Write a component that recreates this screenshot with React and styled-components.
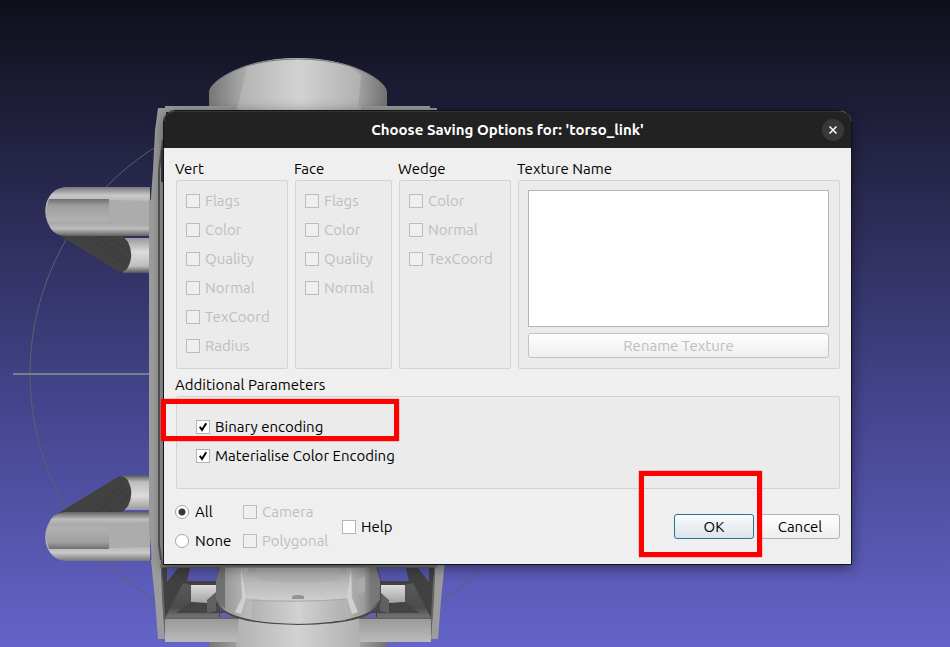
import React from "react";
import styled, { createGlobalStyle, css } from "styled-components";

const GlobalStyle = createGlobalStyle`
  *, *::before, *::after { box-sizing: border-box; }
  body {
    margin: 0;
    font-family: Ubuntu, "Noto Sans", "Open Sans", sans-serif;
    font-size: 15px;
    color: #000;
  }
  button, input, select { font: inherit; color: inherit; margin: 0; }
`;

const Viewport = styled.main`
  position: relative;
  min-height: 100vh;
  overflow: hidden;
  padding: 110px 98px 82px 163px;
  background: linear-gradient(#0f0f1a 0%, #151527 7%, #242445 24%, #43438a 61%, #6464c9 100%);
`;

const Scene = styled.svg`
  position: absolute;
  inset: 0;
  width: 100%;
  height: 100%;
`;

const Dialog = styled.section`
  position: relative;
  border: 1px solid #121218;
  border-radius: 12px 12px 0 0;
  background: #efefef;
  box-shadow: 0 3px 14px rgba(0, 0, 0, 0.45);
`;

const TitleBar = styled.header`
  display: grid;
  grid-template-columns: 1fr auto 1fr;
  align-items: center;
  height: 37px;
  padding: 0 7px 1px;
  border-radius: 11px 11px 0 0;
  background: #222;
  border-top: 1px solid #343434;
  color: #fff;
`;

const Title = styled.h1`
  grid-column: 2;
  margin: 0;
  font-size: 15px;
  line-height: 20px;
  font-weight: 700;
`;

const CloseButton = styled.button`
  justify-self: end;
  display: grid;
  place-items: center;
  width: 22px;
  height: 22px;
  padding: 0;
  border: 0;
  border-radius: 50%;
  background: #383838;
  color: #fff;
`;

const Body = styled.form`
  padding: 10px 11px 14px 12px;
`;

const Columns = styled.div`
  display: grid;
  grid-template-columns: 112px 97px 112px minmax(0, 1fr);
  gap: 7px;
`;

const Group = styled.div`
  position: relative;
  display: flex;
  flex-direction: column;
  min-width: 0;
`;

const GroupTitle = styled.h2`
  margin: 0 0 0 -1px;
  font-size: 15px;
  font-weight: 400;
  line-height: 22px;
`;

const framed = css`
  flex: 1;
  display: flex;
  flex-direction: column;
  border: 1px solid #d3d3d3;
  border-radius: 2px;
  background: #ebebeb;
`;

const OptionList = styled.div`
  ${framed}
  gap: 11px;
  padding: ${(p) => (p.$roomy ? "21px 19px 23px" : "11px 9px 13px")};
`;

const TextureFrame = styled.div`
  ${framed}
  gap: 6px;
  padding: 9px 10px 10px 9px;
`;

const TextureList = styled.select`
  flex: 1;
  width: 100%;
  min-height: 0;
  border: 1px solid #b4b4b4;
  border-radius: 0;
  background: #fff;
  outline: 0;
`;

const PushButton = styled.button`
  height: 25px;
  min-width: 80px;
  padding: 0 8px;
  border: 1px solid ${(p) => (p.$primary ? "#2f7099" : "#b3b3b3")};
  border-radius: 3px;
  background: ${(p) =>
    p.$primary ? "linear-gradient(#fafbfc, #dbe3ea)" : "linear-gradient(#fefefe, #eeeeee)"};
  line-height: 20px;
  &:disabled { color: #bebebe; border-color: #c3c3c3; }
`;

const Option = styled.label`
  display: flex;
  align-items: center;
  gap: ${(p) => (p.$radio ? "6px" : "5px")};
  height: 18px;
  line-height: 20px;
  white-space: nowrap;
  color: ${(p) => (p.$disabled ? "#bebebe" : "#000")};
`;

const tick =
  "url(\"data:image/svg+xml,%3Csvg xmlns='http://www.w3.org/2000/svg' viewBox='0 0 12 12'%3E%3Cpath d='M2.8 5.8 5 9 9.2 2.2' fill='none' stroke='%23000' stroke-width='2'/%3E%3C/svg%3E\")";

const Tick = styled.input`
  appearance: none;
  flex: none;
  width: 14px;
  height: 14px;
  border: 1px solid #b4b4b4;
  background: #fff;
  &:disabled { background: #efefef; border-color: #bcbcbc; }
  &:checked { background: #fff ${tick} center / 12px 12px no-repeat; }
`;

const Radio = styled.input`
  appearance: none;
  flex: none;
  width: 14px;
  height: 14px;
  border: 1px solid #a3a3a3;
  border-radius: 50%;
  background: #fff;
  &:checked { background: radial-gradient(circle, #363636 0 3px, #fff 4px); }
`;

const Parameters = styled(Group)`
  margin-top: 5px;
`;

const Footer = styled.div`
  display: flex;
  align-items: center;
  margin: 14px 0 0 -1px;
`;

const Stack = styled.div`
  display: flex;
  flex-direction: column;
  gap: 11px;
  width: ${(p) => p.$width};
`;

const Actions = styled.div`
  position: relative;
  display: flex;
  gap: 6px;
  margin-left: auto;
`;

const Highlight = styled.span`
  position: absolute;
  border: 5px solid #fe0000;
  box-shadow: 0 0 1px #fe0000;
  pointer-events: none;
  ${(p) =>
    p.$area === "encoding"
      ? css`top: 25px; left: -15px; width: 238px; height: 42px;`
      : css`top: -43px; left: -35px; width: 123px; height: 86px;`}
`;

function Check({ label, disabled, ...rest }) {
  return (
    <Option $disabled={disabled}>
      <Tick type="checkbox" disabled={disabled} {...rest} />
      {label}
    </Option>
  );
}

function AttributeGroup({ title, items }) {
  return (
    <Group role="group" aria-label={title}>
      <GroupTitle>{title}</GroupTitle>
      <OptionList>
        {items.map((item) => (
          <Check key={item} label={item} disabled />
        ))}
      </OptionList>
    </Group>
  );
}

function Arm() {
  return (
    <g>
      <path d="M123 238h27v35h-27z" fill="url(#peg)" />
      <path d="M57 234 116 270Q122 274 127 269 135 256 128 242L122 235z" fill="#414141" />
      <path d="m96 236 31 24m-20-24 22 16m-39-14 34 27" stroke="#3b3b3b" fill="none" />
      <path d="M150 187H66Q51 188 46 204 43 217 51 229 56 236 67 236H150z" fill="url(#tube)" />
      <path d="M109 199H49Q45 209 48 222L60 221H109z" fill="url(#slot)" />
      <path d="M109 200 150 201V226L109 221z" fill="#acacac" />
    </g>
  );
}

function BaseSide() {
  return (
    <g>
      <path d="M161 567H220V620H161z" fill="#414141" />
      <path d="M167 568H178L167 582zM190 568H221L218 581H187z" fill="#5656ae" />
      <path d="M165 618 183 583 191 585V603L219 607V618z" fill="url(#floor)" />
      <path d="M191 585H218V602L207 603 191 602z" fill="url(#block)" />
      <path d="M191 602 207 604 226 613H176z" fill="#444" />
      <path d="M207 600 216 592V611L207 613z" fill="#606060" />
      <path d="M151 560H161L162 590 165 639H158L155 600z" fill="#9c9c9c" />
      <path d="M161 566 163 580 165 618V639L162 600z" fill="#646464" />
    </g>
  );
}

function RobotScene() {
  return (
    <Scene viewBox="0 0 950 647" preserveAspectRatio="xMidYMid slice" aria-hidden="true">
      <defs>
        <linearGradient id="cap">
          <stop offset="0" stopColor="#777" />
          <stop offset=".18" stopColor="#a5a5a5" />
          <stop offset=".5" stopColor="#cfcfcf" />
          <stop offset=".82" stopColor="#a8a8a8" />
          <stop offset="1" stopColor="#707070" />
        </linearGradient>
        <linearGradient id="facet">
          <stop offset="0" stopColor="#b2b2b2" />
          <stop offset=".5" stopColor="#d2d2d2" />
          <stop offset="1" stopColor="#b0b0b0" />
        </linearGradient>
        <linearGradient id="tube" x2="0" y2="1">
          <stop offset="0" stopColor="#777" />
          <stop offset=".17" stopColor="#c9c9c9" />
          <stop offset=".3" stopColor="#b6b6b6" />
          <stop offset=".75" stopColor="#aaa" />
          <stop offset=".85" stopColor="#bdbdbd" />
          <stop offset="1" stopColor="#626262" />
        </linearGradient>
        <linearGradient id="slot" x2="0" y2="1">
          <stop offset="0" stopColor="#707070" />
          <stop offset=".3" stopColor="#9f9f9f" />
          <stop offset="1" stopColor="#b3b3b3" />
        </linearGradient>
        <linearGradient id="peg" x2="0" y2="1">
          <stop offset="0" stopColor="#999" />
          <stop offset=".4" stopColor="#dcdcdc" />
          <stop offset=".8" stopColor="#bdbdbd" />
          <stop offset="1" stopColor="#555" />
        </linearGradient>
        <linearGradient id="block" x2="0" y2="1">
          <stop offset="0" stopColor="#ddd" />
          <stop offset="1" stopColor="#a2a2a2" />
        </linearGradient>
        <linearGradient id="floor" x2="0" y2="1">
          <stop offset="0" stopColor="#585858" />
          <stop offset=".7" stopColor="#4c4c4c" />
          <stop offset="1" stopColor="#777" />
        </linearGradient>
        <linearGradient id="ring">
          <stop offset="0" stopColor="#555" />
          <stop offset=".06" stopColor="#9a9a9a" />
          <stop offset=".2" stopColor="#bababa" />
          <stop offset=".3" stopColor="#c7c7c7" />
          <stop offset=".5" stopColor="#c0c0c0" />
          <stop offset=".72" stopColor="#c5c5c5" />
          <stop offset=".9" stopColor="#9c9c9c" />
          <stop offset="1" stopColor="#4c4c4c" />
        </linearGradient>
        <linearGradient id="recess" x2="0" y2="1">
          <stop offset="0" stopColor="#a4a4a4" />
          <stop offset=".5" stopColor="#bababa" />
          <stop offset="1" stopColor="#cecece" />
        </linearGradient>
        <linearGradient id="plate" x2="0" y2="1">
          <stop offset="0" stopColor="#999" />
          <stop offset=".5" stopColor="#aaa" />
          <stop offset="1" stopColor="#bbb" />
        </linearGradient>
      </defs>

      <circle cx="298" cy="374" r="268" fill="none" stroke="#5f5f69" />
      <path d="M13 374H150" stroke="#6a8786" strokeWidth="2" />

      <path d="M209 110V91Q213 80 235 70 262 58 298 58 334 58 361 70 383 80 387 91V110z" fill="url(#cap)" />
      <path d="M237 110 247 67Q270 60 298 60 328 60 350 67L361 75 358 110z" fill="url(#facet)" />
      <path d="M210 89Q219 76 246 66 270 59 298 59 326 59 350 66 378 76 386 89" fill="none" stroke="#7b7b7b" />

      <Arm />
      <g transform="translate(0 748) scale(1 -1)">
        <Arm />
      </g>

      <path d="M158 108H165V106H237V112H361V106H430V108H437V112H166V566H152L150 530V210L153 170 155 130z" fill="#9b9b9b" />
      <path d="M237 106H361V112H237z" fill="url(#facet)" />
      <path d="M149 200H155V545H151L149 530z" fill="#9c9c9c" />
      <path d="M163 140 159 170V545L162 566" fill="none" stroke="#585858" strokeWidth="2" />
      <path d="M161 150H163V182H161z" fill="#3e3e3e" />

      <BaseSide />
      <g transform="translate(596 0) scale(-1 1)">
        <BaseSide />
      </g>
      <path d="M165 619H431V642H165z" fill="url(#plate)" />
      <path d="M166 618H430" stroke="#666" strokeWidth="2" />
      <path d="M209 642H387V647H209z" fill="url(#cap)" />
      <path d="M239 617H359L360 647H236z" fill="url(#facet)" />
      <path d="M219 566H377L381 580V601Q377 624 298 625 220 624 216 601V580z" fill="#484848" />
      <path d="M220 566H376L380 580V600Q373 622 298 624 223 622 216 600V580z" fill="url(#ring)" />
      <path d="M220 567H225V608L216 600V580z" fill="#707070" />
      <path d="M371 567H376L380 580V600L371 608z" fill="#777" />
      <path d="M250 566H346L350 598Q298 603 245 598L241 580z" fill="url(#recess)" />
      <path d="M254 566H342L338 580Q298 585 260 580z" fill="#afafaf" />
      <path d="M241 568 246 598 241 614 235 612 242 598zM351 568 347 598 352 614 358 612 352 598z" fill="#d0d0d0" />
      <path d="M252 600Q298 603 344 599L346 620Q298 626 251 620z" fill="url(#facet)" />
      <path d="M250 600Q298 603 347 599" fill="none" stroke="#aaa" />
      <path d="M292 596Q298 594 304 596V599H292z" fill="#939393" />
      <path d="M357 580 365 576V592L357 594z" fill="#aaa" />
      <path d="M160 566H437" stroke="#777" strokeWidth="3" />
    </Scene>
  );
}

export default function App() {
  return (
    <>
      <GlobalStyle />
      <Viewport>
        <RobotScene />
        <Dialog role="dialog" aria-labelledby="dialog-title">
          <TitleBar>
            <Title id="dialog-title">Choose Saving Options for: 'torso_link'</Title>
            <CloseButton type="button" aria-label="Close">
              <svg width="10" height="10" viewBox="0 0 10 10" aria-hidden="true">
                <path d="m1.5 1.5 7 7m0-7-7 7" stroke="currentColor" strokeWidth="1.5" />
              </svg>
            </CloseButton>
          </TitleBar>
          <Body onSubmit={(e) => e.preventDefault()}>
            <Columns>
              <AttributeGroup
                title="Vert"
                items={["Flags", "Color", "Quality", "Normal", "TexCoord", "Radius"]}
              />
              <AttributeGroup title="Face" items={["Flags", "Color", "Quality", "Normal"]} />
              <AttributeGroup title="Wedge" items={["Color", "Normal", "TexCoord"]} />
              <Group>
                <GroupTitle id="texture-title">Texture Name</GroupTitle>
                <TextureFrame>
                  <TextureList size={4} aria-labelledby="texture-title" />
                  <PushButton type="button" disabled>Rename Texture</PushButton>
                </TextureFrame>
              </Group>
            </Columns>
            <Parameters role="group" aria-label="Additional Parameters">
              <GroupTitle>Additional Parameters</GroupTitle>
              <OptionList $roomy>
                <Check label="Binary encoding" defaultChecked />
                <Check label="Materialise Color Encoding" defaultChecked />
              </OptionList>
              <Highlight $area="encoding" />
            </Parameters>
            <Footer>
              <Stack $width="68px">
                <Option $radio>
                  <Radio type="radio" name="selection" defaultChecked />
                  All
                </Option>
                <Option $radio>
                  <Radio type="radio" name="selection" />
                  None
                </Option>
              </Stack>
              <Stack $width="99px">
                <Check label="Camera" disabled />
                <Check label="Polygonal" disabled />
              </Stack>
              <Check label="Help" />
              <Actions>
                <PushButton type="submit" $primary>OK</PushButton>
                <PushButton type="button">Cancel</PushButton>
                <Highlight $area="confirm" />
              </Actions>
            </Footer>
          </Body>
        </Dialog>
      </Viewport>
    </>
  );
}
